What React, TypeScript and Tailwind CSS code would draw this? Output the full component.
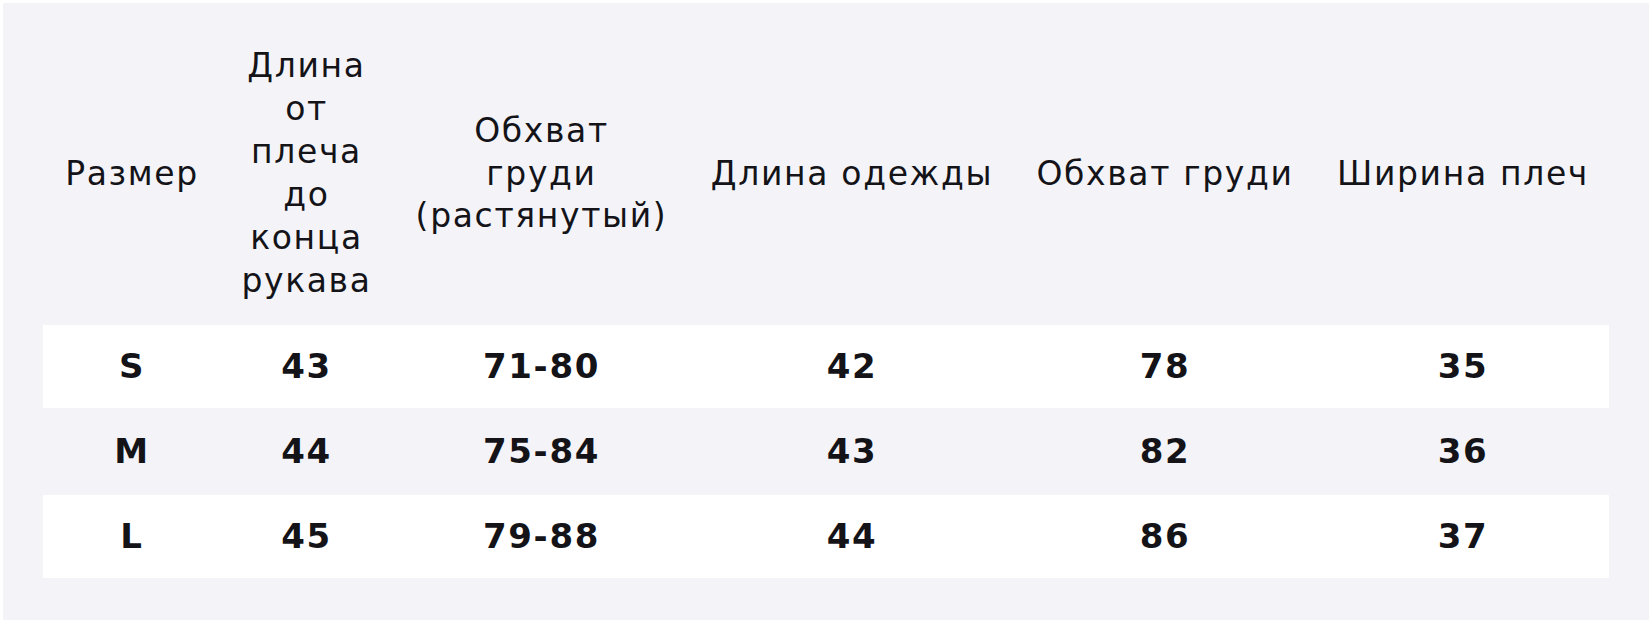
const columns = [
  { key: 'size', width: 'w-[178px]', title: ['Размер'] },
  { key: 'sleeve', width: 'w-[171px]', title: ['Длина', 'от', 'плеча', 'до', 'конца', 'рукава'] },
  { key: 'stretch', width: 'w-[299px]', title: ['Обхват', 'груди', '(растянутый)'] },
  { key: 'length', width: 'w-[322px]', title: ['Длина одежды'] },
  { key: 'chest', width: 'w-[304px]', title: ['Обхват груди'] },
  { key: 'shoulder', width: 'w-[292px]', title: ['Ширина плеч'] },
]

const rows = [
  { cells: ['S', '43', '71-80', '42', '78', '35'], className: 'h-[83px] bg-white' },
  { cells: ['M', '44', '75-84', '43', '82', '36'], className: 'h-[87px]' },
  { cells: ['L', '45', '79-88', '44', '86', '37'], className: 'h-[83px] bg-white' },
]

export default function App() {
  return (
    <div className="bg-white p-[3px] font-['DejaVu_Sans',sans-serif] text-[#131318]">
      <div className="bg-[#f4f4f8] px-10 pt-10 pb-[42px]">
        {/* Header */}
        <div className="flex h-[262px] mb-5 items-center">
          {columns.map(col => (
            <div key={col.key} className={`${col.width} text-center text-[33px] leading-[1.3] tracking-[0.05em]`}>
              {col.title.map(line => (
                <div key={line}>{line}</div>
              ))}
            </div>
          ))}
        </div>

        {/* Rows */}
        {rows.map(row => (
          <div key={row.cells[0]} className={`flex items-center ${row.className}`}>
            {row.cells.map((cell, i) => (
              <div key={i} className={`${columns[i].width} text-center text-[34px] font-bold tracking-[0.05em]`}>
                {cell}
              </div>
            ))}
          </div>
        ))}
      </div>
    </div>
  )
}
